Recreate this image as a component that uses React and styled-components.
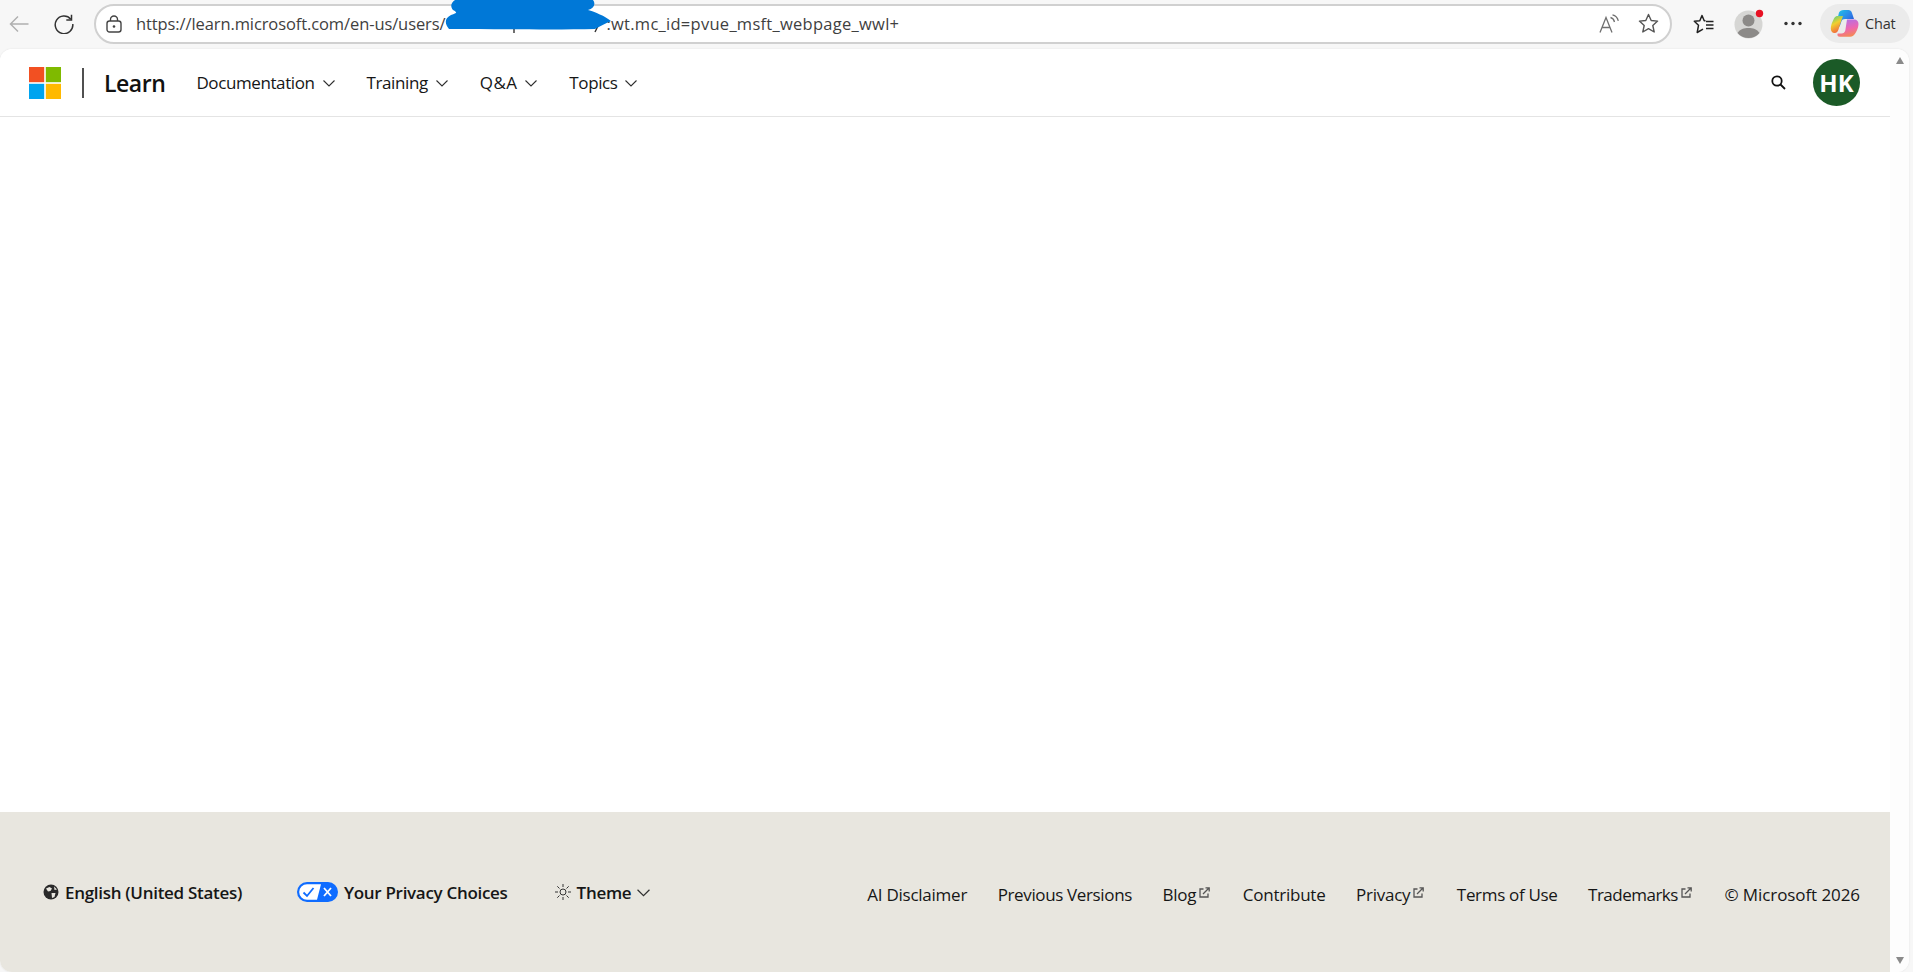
import styled, { createGlobalStyle } from "styled-components";

const GlobalStyle = createGlobalStyle`
  html, body {
    margin: 0;
    padding: 0;
    height: 100%;
    overflow: hidden;
    background: #f7f7f7;
  }
  * {
    box-sizing: border-box;
  }
  body {
    font-family: "Open Sans", "Noto Sans", "Liberation Sans", sans-serif;
    color: #161616;
  }
`;

const Screen = styled.div`
  height: 972px;
  display: flex;
  flex-direction: column;
  background: #f7f7f7;
`;

// browser chrome -----------------------------------------------
const Toolbar = styled.div`
  height: 49px;
  flex: none;
  display: flex;
  align-items: center;
  padding: 0 5px 2px 9px;
`;

const ToolIcon = styled.svg`
  flex: none;
  display: block;
  margin-left: ${(p) => p.$ml || 0}px;
`;

const UrlField = styled.div`
  width: 1578px;
  height: 40px;
  margin-left: 20px;
  flex: none;
  display: flex;
  align-items: center;
  background: #fff;
  border: 2px solid #d0d0d0;
  border-radius: 20px;
  padding: 0 11px 0 10px;
`;

const UrlText = styled.div`
  flex: 1;
  margin-left: 14px;
  font-size: 16.5px;
  letter-spacing: -0.1px;
  white-space: nowrap;
  color: #3f3f3f;
  display: flex;
  align-items: center;
`;

const UrlTail = styled.span`
  letter-spacing: 0.27px;
`;

const Redacted = styled.span`
  position: relative;
  display: inline-block;
  width: 161px;
  height: 20px;
`;

const RedactedInk = styled.svg`
  position: absolute;
  left: 0;
  top: -14px;
`;

const ChatPill = styled.div`
  width: 90px;
  height: 39px;
  margin-left: 18px;
  flex: none;
  display: flex;
  align-items: center;
  gap: 6px;
  padding-left: 10px;
  background: #ebebeb;
  border-radius: 20px;
  font-size: 14.5px;
  letter-spacing: -0.2px;
  color: #333;
`;

// page -----------------------------------------------
const PageFrame = styled.div`
  flex: 1;
  min-height: 0;
  margin-right: 4px;
  display: flex;
  background: #fff;
  border-radius: 12px;
  overflow: hidden;
  box-shadow: 0 0 2px rgba(0, 0, 0, 0.1);
`;

const Content = styled.div`
  flex: 1;
  min-width: 0;
  display: flex;
  flex-direction: column;
`;

const Scrollbar = styled.div`
  width: 19px;
  flex: none;
  display: flex;
  flex-direction: column;
  justify-content: space-between;
  align-items: center;
  padding: 8px 0 8px;
  background: #fdfdfd;
`;

const ScrollArrow = styled.div`
  width: 0;
  height: 0;
  border-left: 4.5px solid transparent;
  border-right: 4.5px solid transparent;
  ${(p) =>
    p.$down
      ? "border-top: 7px solid #8a8a8a;"
      : "border-bottom: 7px solid #8a8a8a;"}
`;

const SiteNav = styled.header`
  height: 68px;
  flex: none;
  display: flex;
  align-items: center;
  padding: 0 30px 0 29px;
  background: #fff;
  border-bottom: 1px solid #e4e4e4;
`;

const Logo = styled.svg`
  flex: none;
  display: block;
`;

const NavDivider = styled.div`
  width: 2px;
  height: 30px;
  margin: 0 21px;
  background: #505050;
`;

const Brand = styled.div`
  font-size: 23px;
  font-weight: 600;
  letter-spacing: -0.45px;
  margin-left: -1px;
  margin-right: 31px;
  color: #111;
`;

const NavItem = styled.div`
  display: flex;
  align-items: center;
  gap: 8px;
  font-size: 17px;
  letter-spacing: ${(p) => p.$track ?? -0.4}px;
  margin-right: 32px;
  white-space: nowrap;
`;

const Spacer = styled.div`
  flex: 1;
`;

const Avatar = styled.div`
  width: 47px;
  height: 47px;
  margin-left: 27px;
  flex: none;
  display: flex;
  align-items: center;
  justify-content: center;
  border-radius: 50%;
  background: #1b5a27;
  color: #fff;
  font-size: 24px;
  font-weight: 700;
`;

const Main = styled.main`
  flex: 1;
  background: #fff;
`;

const Footer = styled.footer`
  height: 160px;
  flex: none;
  display: flex;
  align-items: center;
  justify-content: space-between;
  padding: 0 30px 0 43px;
  background: #e8e6df;
`;

const FooterLeft = styled.div`
  display: flex;
  align-items: center;
`;

const Control = styled.div`
  display: flex;
  align-items: center;
  gap: ${(p) => p.$gap || 6}px;
  margin-right: ${(p) => p.$mr || 0}px;
  font-size: 17px;
  font-weight: 600;
  letter-spacing: -0.3px;
  white-space: nowrap;
`;

const FooterLinks = styled.nav`
  display: flex;
  align-items: center;
  margin-top: 4px;
`;

const FooterLink = styled.a`
  display: flex;
  align-items: flex-start;
  margin-left: 30.5px;
  font-size: 17px;
  letter-spacing: ${(p) => p.$track ?? -0.24}px;
  white-space: nowrap;
  color: #161616;
`;

const External = styled.svg`
  flex: none;
  margin: 4px 2px 0 3px;
`;

// icons -----------------------------------------------
const Chevron = ({ size = 12 }) => (
  <svg width={size} height={size} viewBox="0 0 12 12" fill="none">
    <path d="M0.5 3.5 L6 9 L11.5 3.5" stroke="#303030" strokeWidth="1.1" />
  </svg>
);

const ExternalIcon = () => (
  <External width="11" height="11" viewBox="0 0 11 11" fill="none">
    <path d="M4.5 2H1v8h8V6.5" stroke="#555" strokeWidth="1.3" />
    <path d="M4 7L10 1M6.5 .8h3.7v3.7" stroke="#555" strokeWidth="1.3" />
  </External>
);

const FooterEntry = ({ label, external, track }) => (
  <FooterLink $track={track}>
    {label}
    {external && <ExternalIcon />}
  </FooterLink>
);

const CopilotIcon = () => (
  <svg width="29" height="29" viewBox="0 0 29 29">
    <defs>
      <linearGradient id="copA" x1="0" y1="0" x2="1" y2="1">
        <stop offset="0" stopColor="#1fc8e8" />
        <stop offset="0.55" stopColor="#2f7fe8" />
        <stop offset="1" stopColor="#1a3fc0" />
      </linearGradient>
      <linearGradient id="copB" x1="0" y1="0" x2="0.4" y2="1">
        <stop offset="0" stopColor="#3ecf8e" />
        <stop offset="0.5" stopColor="#f0d030" />
        <stop offset="1" stopColor="#f26a3c" />
      </linearGradient>
      <linearGradient id="copC" x1="0.3" y1="0" x2="0.6" y2="1">
        <stop offset="0" stopColor="#b070e8" />
        <stop offset="0.55" stopColor="#ee66b0" />
        <stop offset="1" stopColor="#f58a50" />
      </linearGradient>
    </defs>
    <path
      d="M9 3.5C10 2 11 1 14 1h4.5c1.7 0 2.8 1 3.4 2.8L24 10h-9c-2 0-3 .8-3.6 2.6L9.500 18 7 12z"
      fill="url(#copA)"
    />
    <path
      d="M4 9.500C5 7.500 6.500 7 8 7h5l-2 5.500-2.500 8c-.6 1.900-1.600 3.500-4 3.500-2.400 0-3.500-1.800-3.700-4.300C.6 16.500 2.500 12.500 4 9.500z"
      fill="url(#copB)"
    />
    <path
      d="M17 10.500h7.500c2 0 4 1.500 4 4.500 0 3-1.500 6.500-3 9-1.300 2.300-3 3.700-5.500 3.700H10c-2.500 0-3-1.300-2.300-3.200h3.800c2 0 3.200-1 3.800-3z"
      fill="url(#copC)"
    />
  </svg>
);

export default function App() {
  return (
    <Screen>
      <GlobalStyle />
      <Toolbar>
        <ToolIcon width="20" height="18" viewBox="0 0 20 18" fill="none">
          <path
            d="M19.500 9H1.500M9 1.500L1.500 9L9 16.500"
            stroke="#b0b0b0"
            strokeWidth="1.5"
          />
        </ToolIcon>
        <ToolIcon $ml={25} width="20" height="20" viewBox="0 0 20 20" fill="none">
          <path
            d="M16.800 5.200A8.800 8.800 0 1 0 18.800 10"
            stroke="#333"
            strokeWidth="1.5"
          />
          <path d="M17.500 .8V6h-5.200" stroke="#333" strokeWidth="1.500" />
        </ToolIcon>
        <UrlField>
          <svg width="16" height="18" viewBox="0 0 16 18" fill="none">
            <rect x="1" y="6" width="14" height="11" rx="2.500" stroke="#444" strokeWidth="1.400" />
            <path d="M4.500 6V4.500a3.500 3.500 0 0 1 7 0V6" stroke="#444" strokeWidth="1.400" />
            <circle cx="8" cy="11.500" r="1.300" fill="#444" />
          </svg>
          <UrlText>
            https://learn.microsoft.com/en-us/users/
            <Redacted>
              <RedactedInk width="172" height="36" viewBox="0 0 172 36">
                <path d="M69 27V33M153 26L150 32" stroke="#333" strokeWidth="1.400" />
                <path
                  d="M10 0H148C151 4 149 8 143 10C150 12 160 16 166 21C160 24 155 26 150 29C110 30 50 29 4 29C-1 23 0 18 6 15C12 13 13 13 8 10C5 6 6 3 10 0Z"
                  fill="#0078d7"
                />
              </RedactedInk>
            </Redacted>
            <UrlTail>:wt.mc_id=pvue_msft_webpage_wwl+</UrlTail>
          </UrlText>
          <ToolIcon width="20" height="20" viewBox="0 0 20 20" fill="none">
            <path d="M1 18.500L7 3.500L13 18.500M3.200 13.500H10.800" stroke="#707070" strokeWidth="1.300" />
            <path d="M11.500 3.500C13.500 4 15 5.500 15.500 8M13.500 .8C16.500 1.500 18.500 3.500 19.300 6.800" stroke="#707070" strokeWidth="1.300" />
          </ToolIcon>
          <ToolIcon $ml={19} width="21" height="21" viewBox="0 0 21 21" fill="none">
            <path
              d="M10.500 1.500L13.200 7.500L19.600 8.100L14.800 12.500L16.200 19L10.500 15.600L4.800 19L6.200 12.500L1.400 8.100L7.800 7.500Z"
              stroke="#555"
              strokeWidth="1.400"
              strokeLinejoin="round"
            />
          </ToolIcon>
        </UrlField>
        <ToolIcon $ml={21} width="21" height="20" viewBox="0 0 21 20" fill="none">
          <path
            d="M12.500 6.800L11.200 6.800L9 1.500L6.800 6.800L1.300 7.300L5.500 11.300L4.200 18.500L10 15.200"
            stroke="#222"
            strokeWidth="1.500"
            strokeLinejoin="round"
          />
          <path d="M13 7.500H20.500M13 11H20.500M13 14.500H20.500" stroke="#222" strokeWidth="1.300" />
        </ToolIcon>
        <ToolIcon $ml={20} width="30" height="30" viewBox="0 0 30 30">
          <circle cx="14.500" cy="15.500" r="14" fill="#d6d6d4" />
          <circle cx="14.500" cy="11.500" r="6" fill="#8c8a88" />
          <path d="M3.500 24C6 20 10 19 14.500 19S23 20 25.500 24C22.500 27.500 19 29 14.500 29S6.500 27.500 3.500 24z" fill="#8c8a88" />
          <circle cx="25.500" cy="4.500" r="3.700" fill="#e81123" />
        </ToolIcon>
        <ToolIcon $ml={20} width="18" height="5" viewBox="0 0 18 5">
          <circle cx="2" cy="2.500" r="1.700" fill="#333" />
          <circle cx="9" cy="2.500" r="1.700" fill="#333" />
          <circle cx="16" cy="2.500" r="1.700" fill="#333" />
        </ToolIcon>
        <ChatPill>
          <CopilotIcon />
          Chat
        </ChatPill>
      </Toolbar>
      <PageFrame>
        <Content>
          <SiteNav>
            <Logo width="32" height="32" viewBox="0 0 32 32">
              <rect width="15.200" height="15.200" fill="#f25022" />
              <rect x="16.800" width="15.200" height="15.200" fill="#7fba00" />
              <rect y="16.800" width="15.200" height="15.200" fill="#00a4ef" />
              <rect x="16.800" y="16.800" width="15.200" height="15.200" fill="#ffb900" />
            </Logo>
            <NavDivider />
            <Brand>Learn</Brand>
            <NavItem>
              Documentation <Chevron />
            </NavItem>
            <NavItem>
              Training <Chevron />
            </NavItem>
            <NavItem $track={0.4}>
              Q&amp;A <Chevron />
            </NavItem>
            <NavItem>
              Topics <Chevron />
            </NavItem>
            <Spacer />
            <svg width="15" height="15" viewBox="0 0 15 15" fill="none">
              <circle cx="6" cy="6" r="4.700" stroke="#111" strokeWidth="1.800" />
              <path d="M9.500 9.500L14 14" stroke="#111" strokeWidth="1.800" />
            </svg>
            <Avatar>HK</Avatar>
          </SiteNav>
          <Main />
          <Footer>
            <FooterLeft>
              <Control $mr={55}>
                <svg width="16" height="16" viewBox="0 0 16 16">
                  <circle cx="8" cy="8" r="7.500" fill="#2a2a2a" />
                  <path
                    d="M3 4.500L6.500 3L9 4.500L7.500 7L5 7.500zM8.500 9H12.500L11.500 13L9 14zM11 2.500L14 5.500L11.500 6z"
                    fill="#e8e6df"
                  />
                </svg>
                English (United States)
              </Control>
              <Control $mr={47}>
                <svg width="41" height="20" viewBox="0 0 41 20">
                  <rect x="0" y="0" width="41" height="20" rx="10" fill="#0f6cff" />
                  <path d="M10 2.200H24L20 17.800H10a7.800 7.800 0 0 1 0-15.600z" fill="#fff" />
                  <path d="M6.500 10.500L10 14L16.500 6" fill="none" stroke="#0f6cff" strokeWidth="1.800" />
                  <path d="M27 6L34 14M34 6L27 14" fill="none" stroke="#fff" strokeWidth="1.800" />
                </svg>
                Your Privacy Choices
              </Control>
              <Control $gap={6}>
                <svg width="16" height="16" viewBox="0 0 16 16" fill="none" stroke="#333" strokeWidth="1">
                  <circle cx="8" cy="8" r="3" />
                  <path d="M8 0V3M8 13V16M0 8H3M13 8H16M2.300 2.300L4.500 4.500M11.500 11.500L13.700 13.700M13.700 2.300L11.500 4.500M4.500 11.500L2.300 13.700" />
                </svg>
                Theme
                <Chevron size={13} />
              </Control>
            </FooterLeft>
            <FooterLinks>
              <FooterEntry label="AI Disclaimer" />
              <FooterEntry label="Previous Versions" track={-0.36} />
              <FooterEntry label="Blog" external />
              <FooterEntry label="Contribute" />
              <FooterEntry label="Privacy" external />
              <FooterEntry label="Terms of Use" track={-0.32} />
              <FooterEntry label="Trademarks" external track={-0.5} />
              <FooterEntry label="© Microsoft 2026" track={-0.08} />
            </FooterLinks>
          </Footer>
        </Content>
        <Scrollbar>
          <ScrollArrow />
          <ScrollArrow $down />
        </Scrollbar>
      </PageFrame>
    </Screen>
  );
}
